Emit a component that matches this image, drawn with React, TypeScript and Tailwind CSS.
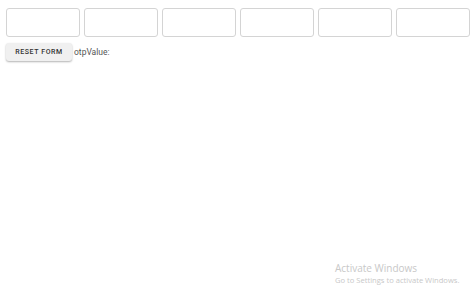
import React from "react";

export default function App() {
  const boxes = [0, 1, 2, 3, 4, 5];
  return (
    <div className="relative w-[474px] h-[287px] bg-white overflow-hidden" style={{ fontFamily: "Roboto, 'Liberation Sans', sans-serif" }}>
      <div className="flex gap-[4px] pl-[6px] pt-[8px]">
        {boxes.map((b) => (
          <input
            key={b}
            className="w-[74px] h-[29px] border border-[#d4d4d4] rounded-[3px] bg-white outline-none"
            type="text"
          />
        ))}
      </div>
      <div className="flex items-center pl-[6px] pt-[6px]">
        <button className="w-[66px] h-[18px] bg-[#f0f0f0] rounded-[3px] shadow-[0_1px_2px_rgba(0,0,0,0.3)] text-[7px] font-medium tracking-[0.6px] text-[#333] flex items-center justify-center">
          RESET FORM
        </button>
        <span className="ml-[2px] text-[8.5px] text-[#555]">otpValue:</span>
      </div>
      <div className="absolute left-[335px] top-[262px] text-[#c8c8c8]" style={{ fontFamily: "'Open Sans', 'Noto Sans', sans-serif" }}>
        <div className="text-[10px] leading-[13px]">Activate Windows</div>
        <div className="text-[7.6px] leading-[10px]">Go to Settings to activate Windows.</div>
      </div>
    </div>
  );
}
